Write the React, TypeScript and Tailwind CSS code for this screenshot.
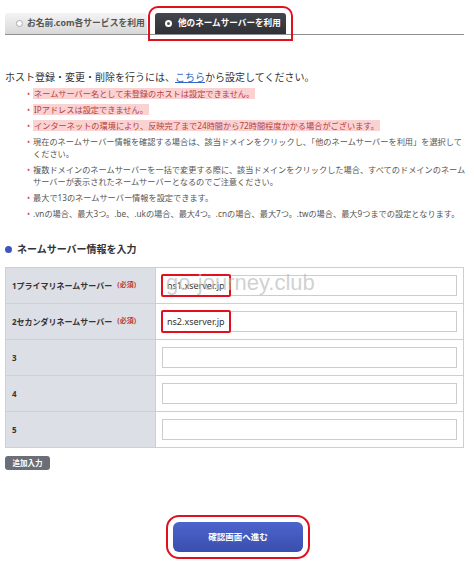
import React from 'react';

const notes = [
  { lines: ['ネームサーバー名として未登録のホストは設定できません。'], alert: true },
  { lines: ['IPアドレスは設定できません。'], alert: true },
  { lines: ['インターネットの環境により、反映完了まで24時間から72時間程度かかる場合がございます。'], alert: true },
  {
    lines: [
      '現在のネームサーバー情報を確認する場合は、該当ドメインをクリックし、「他のネームサーバーを利用」を選択して',
      'ください。',
    ],
  },
  {
    lines: [
      '複数ドメインのネームサーバーを一括で変更する際に、該当ドメインをクリックした場合、すべてのドメインのネーム',
      'サーバーが表示されたネームサーバーとなるのでご注意ください。',
    ],
  },
  { lines: ['最大で13のネームサーバー情報を設定できます。'] },
  { lines: ['.vnの場合、最大3つ。.be、.ukの場合、最大4つ。.cnの場合、最大7つ。.twの場合、最大9つまでの設定となります。'] },
];

const rows = [
  { label: '1プライマリネームサーバー', required: true, value: 'ns1.xserver.jp' },
  { label: '2セカンダリネームサーバー', required: true, value: 'ns2.xserver.jp' },
  { label: '3', required: false, value: '' },
  { label: '4', required: false, value: '' },
  { label: '5', required: false, value: '' },
];

const App: React.FC = () => {
  return (
    <div className="w-[474px] h-[568px] bg-white pl-[5px] pr-[10px] text-[#333] font-['Noto_Sans','Noto_Sans_CJK_JP',sans-serif] overflow-hidden">
      {/* タブ */}
      <div className="pt-[13px] flex items-end gap-[8px] border-b-[1.5px] border-[#8e9094]">
        <div className="w-[142px] h-[21px] flex items-center pl-[11px] gap-[4px] rounded-t-[3px] bg-gradient-to-b from-[#f4f4f4] to-[#d8d8d8] text-[#555] text-[8.8px] font-bold whitespace-nowrap">
          <span className="w-[7px] h-[7px] rounded-full border border-[#aaa] bg-white" />
          お名前.com各サービスを利用
        </div>
        <div className="w-[131px] h-[21px] flex items-center pl-[10px] gap-[6px] rounded-t-[3px] bg-gradient-to-b from-[#43464c] to-[#2f3136] text-white text-[8.6px] font-bold whitespace-nowrap outline-2 outline-[#e0101e] outline-offset-[5px]">
          <span className="w-[7px] h-[7px] rounded-full border-[2px] border-white bg-[#555]" />
          他のネームサーバーを利用
        </div>
      </div>

      <p className="mt-[35px] text-[10px] leading-[14px] whitespace-nowrap">
        ホスト登録・変更・削除を行うには、
        <span className="text-[#3366cc] underline">こちら</span>
        から設定してください。
      </p>

      <ul className="mt-[4px] pl-[22px] space-y-[4px] text-[8.2px] leading-[12px]">
        {notes.map((note, i) => (
          <li key={i} className="flex">
            <span className="w-[6px] shrink-0 text-[#d9534f]">•</span>
            <div className="whitespace-nowrap">
              {note.lines.map((line, j) => (
                <div key={j}>
                  <span className={note.alert ? 'bg-[#fbd2d2] text-[#b5413c] px-[1px]' : 'text-[#555]'}>{line}</span>
                </div>
              ))}
            </div>
          </li>
        ))}
      </ul>

      {/* ネームサーバー情報 */}
      <h2 className="mt-[22px] flex items-center gap-[5px] text-[10px] leading-[14px] font-bold text-[#333]">
        <span className="w-[7px] h-[7px] rounded-full bg-[#3d55c0]" />
        ネームサーバー情報を入力
      </h2>

      <div className="relative mt-[11px] border border-[#cfcfcf] border-b-0">
        {rows.map((row, i) => (
          <div key={i} className="grid grid-cols-[150px_1fr] h-[36px] border-b border-[#cfcfcf]">
            <div className="bg-[#dcdfe6] flex items-center pl-[6px] text-[8px] font-bold text-[#333] border-r border-[#cfcfcf]">
              {row.label}
              {row.required && <span className="ml-[5px] text-[7px] text-[#c0392b]">(必須)</span>}
            </div>
            <div className="flex items-center px-[6px]">
              <div className="relative w-full h-[21px] border border-[#cccccc] bg-white flex items-center pl-[4px] text-[9px] text-[#333]">
                {row.value}
                {row.value && (
                  <span className="absolute left-[-2px] top-[-2px] w-[70px] h-[23px] border-2 border-[#e0101e] rounded-[2px]" />
                )}
              </div>
            </div>
          </div>
        ))}
        <span className="absolute left-[160px] top-[4px] text-[22px] leading-[22px] font-['Liberation_Sans',sans-serif] text-[#bdbdbd]/70 pointer-events-none whitespace-nowrap">
          go-journey.club
        </span>
      </div>

      <button className="mt-[8px] w-[45px] h-[14px] rounded-[3px] bg-[#6b6e78] text-white text-[7.5px] font-bold leading-[14px]">
        追加入力
      </button>

      <div className="mt-[50px] flex justify-center pl-[7px]">
        <button className="w-[130px] h-[30px] rounded-[6px] bg-gradient-to-b from-[#4c65cc] to-[#3a4fae] text-white text-[8.5px] font-bold outline-2 outline-[#e0101e] outline-offset-[5px]">
          確認画面へ進む
        </button>
      </div>
    </div>
  );
};

export default App;
